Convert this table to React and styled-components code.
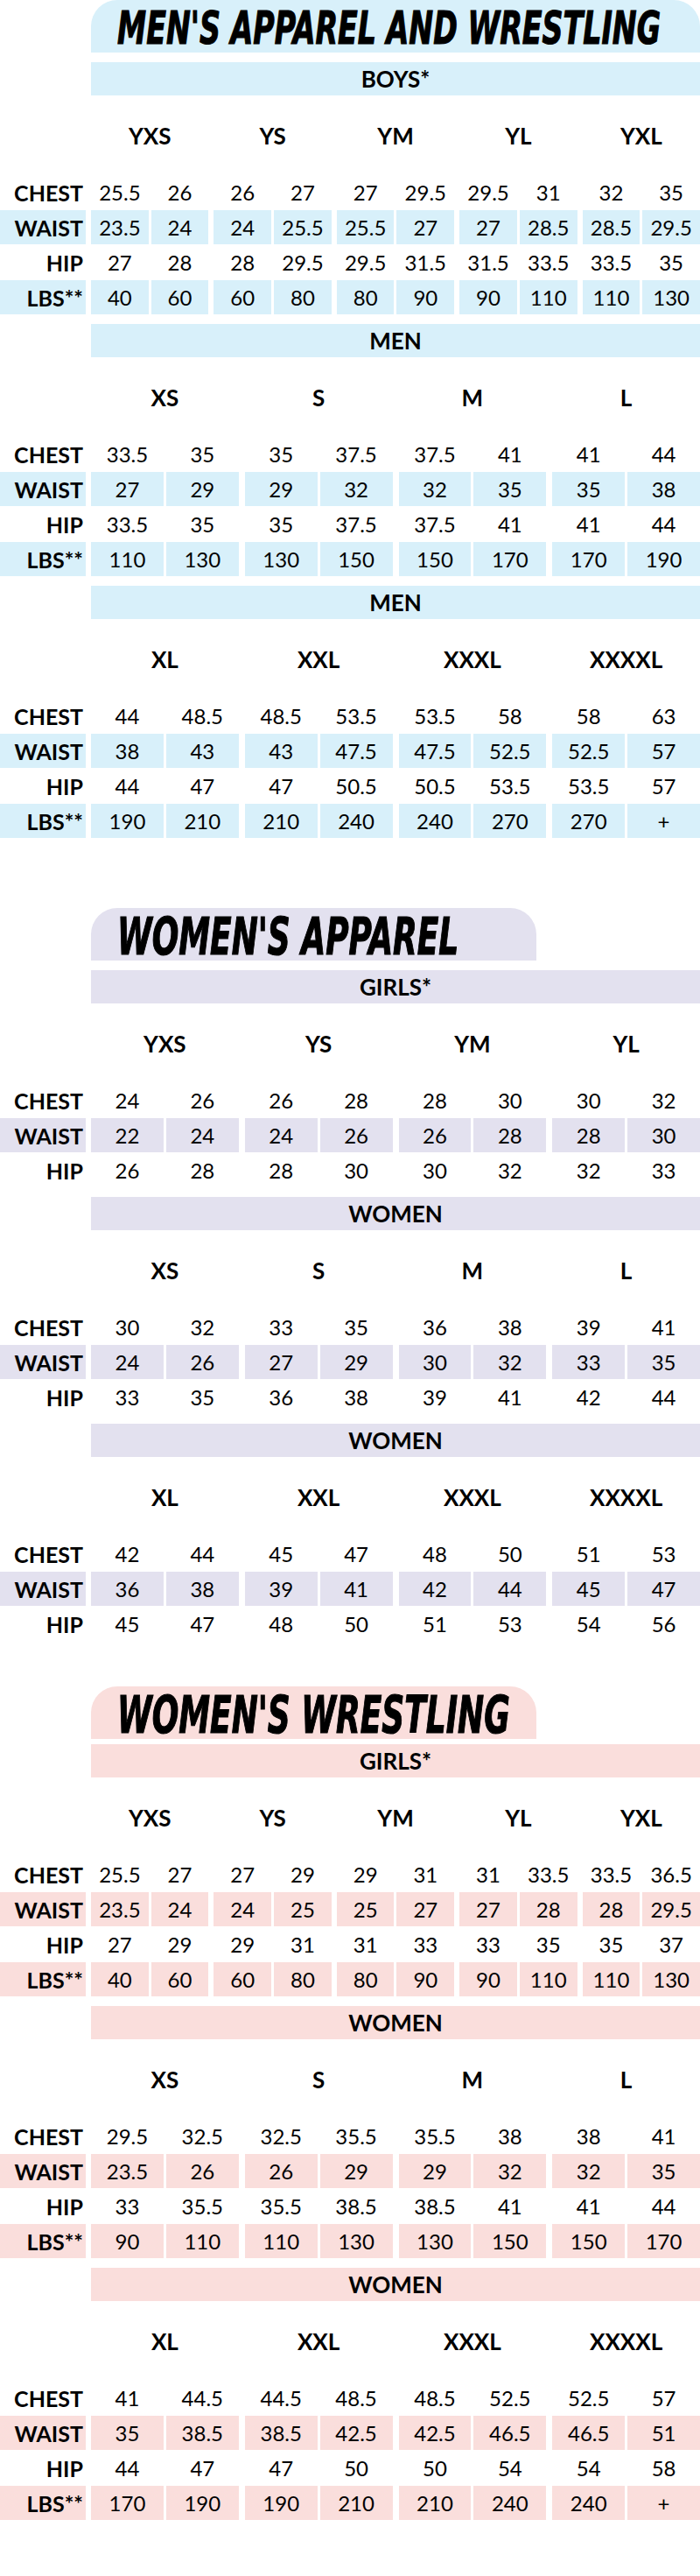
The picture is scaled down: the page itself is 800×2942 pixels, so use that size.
import React from "react";
import styled, { createGlobalStyle } from "styled-components";

const GlobalStyle = createGlobalStyle`
  body {
    margin: 0;
    background: #fff;
    color: #000;
    font-family: Lato, "Open Sans", sans-serif;
  }
`;

const Page = styled.main`
  width: 800px;
  padding-bottom: 64px;
`;

const Section = styled.section`
  display: flex;
  flex-direction: column;
  margin-top: ${(p) => p.$top}px;
`;

const TitleBand = styled.div`
  box-sizing: border-box;
  margin-left: 104px;
  margin-bottom: ${(p) => p.$gap}px;
  width: ${(p) => p.$width}px;
  height: 60px;
  padding: 5px 0 0 30px;
  display: flex;
  align-items: center;
  background: ${(p) => p.$bg};
  border-radius: 30px 30px 0 0;
`;

const Title = styled.h2`
  margin: 0;
  font-family: "DejaVu Sans Condensed", "DejaVu Sans", sans-serif;
  font-weight: 700;
  font-style: italic;
  font-size: ${(p) => p.$size}px;
  line-height: 1;
  white-space: nowrap;
  -webkit-text-stroke: 0.8px #000;
  transform: scaleY(${(p) => p.$stretch});
`;

const Table = styled.div`
  display: flex;
  flex-direction: column;
  & + & {
    margin-top: 11px;
  }
`;

const Band = styled.div`
  margin-left: 104px;
  height: 38px;
  display: flex;
  align-items: center;
  justify-content: center;
  background: ${(p) => p.$bg};
  font-weight: 700;
  font-size: 26px;
`;

const Line = styled.div`
  display: grid;
  grid-template-columns: 98px 1fr;
  column-gap: 6px;
  height: ${(p) => (p.$head ? 91 : 39)}px;
`;

const Groups = styled.div`
  display: grid;
  grid-template-columns: repeat(${(p) => p.$count}, 1fr);
  column-gap: ${(p) => (p.$count === 5 ? 6 : 7)}px;
`;

const SizeName = styled.div`
  display: flex;
  align-items: center;
  justify-content: center;
  font-weight: 700;
  font-size: 26px;
`;

const Rows = styled.div`
  display: flex;
  flex-direction: column;
  gap: 1px;
`;

const Label = styled.div`
  display: flex;
  align-items: center;
  justify-content: flex-end;
  padding-right: 3px;
  background: ${(p) => p.$bg};
  font-weight: 700;
  font-size: 25px;
`;

const Pair = styled.div`
  display: grid;
  grid-template-columns: 1fr 1fr;
  column-gap: 3px;
`;

const Cell = styled.div`
  display: flex;
  align-items: center;
  justify-content: center;
  background: ${(p) => p.$bg};
  font-size: 24px;
`;

const BLUE = "#d8f0fa";
const LAVENDER = "#e3e1ef";
const PINK = "#fadedc";

const sections = [
  {
    title: "MEN'S APPAREL AND WRESTLING",
    color: BLUE,
    width: 696,
    size: 37,
    stretch: 1.4,
    top: 0,
    gap: 11,
    tables: [
      {
        name: "BOYS*",
        sizes: ["YXS", "YS", "YM", "YL", "YXL"],
        rows: [
          ["CHEST", ["25.5", "26", "26", "27", "27", "29.5", "29.5", "31", "32", "35"]],
          ["WAIST", ["23.5", "24", "24", "25.5", "25.5", "27", "27", "28.5", "28.5", "29.5"]],
          ["HIP", ["27", "28", "28", "29.5", "29.5", "31.5", "31.5", "33.5", "33.5", "35"]],
          ["LBS**", ["40", "60", "60", "80", "80", "90", "90", "110", "110", "130"]],
        ],
      },
      {
        name: "MEN",
        sizes: ["XS", "S", "M", "L"],
        rows: [
          ["CHEST", ["33.5", "35", "35", "37.5", "37.5", "41", "41", "44"]],
          ["WAIST", ["27", "29", "29", "32", "32", "35", "35", "38"]],
          ["HIP", ["33.5", "35", "35", "37.5", "37.5", "41", "41", "44"]],
          ["LBS**", ["110", "130", "130", "150", "150", "170", "170", "190"]],
        ],
      },
      {
        name: "MEN",
        sizes: ["XL", "XXL", "XXXL", "XXXXL"],
        rows: [
          ["CHEST", ["44", "48.5", "48.5", "53.5", "53.5", "58", "58", "63"]],
          ["WAIST", ["38", "43", "43", "47.5", "47.5", "52.5", "52.5", "57"]],
          ["HIP", ["44", "47", "47", "50.5", "50.5", "53.5", "53.5", "57"]],
          ["LBS**", ["190", "210", "210", "240", "240", "270", "270", "+"]],
        ],
      },
    ],
  },
  {
    title: "WOMEN'S APPAREL",
    color: LAVENDER,
    width: 509,
    size: 40,
    stretch: 1.45,
    top: 80,
    gap: 11,
    tables: [
      {
        name: "GIRLS*",
        sizes: ["YXS", "YS", "YM", "YL"],
        rows: [
          ["CHEST", ["24", "26", "26", "28", "28", "30", "30", "32"]],
          ["WAIST", ["22", "24", "24", "26", "26", "28", "28", "30"]],
          ["HIP", ["26", "28", "28", "30", "30", "32", "32", "33"]],
        ],
      },
      {
        name: "WOMEN",
        sizes: ["XS", "S", "M", "L"],
        rows: [
          ["CHEST", ["30", "32", "33", "35", "36", "38", "39", "41"]],
          ["WAIST", ["24", "26", "27", "29", "30", "32", "33", "35"]],
          ["HIP", ["33", "35", "36", "38", "39", "41", "42", "44"]],
        ],
      },
      {
        name: "WOMEN",
        sizes: ["XL", "XXL", "XXXL", "XXXXL"],
        rows: [
          ["CHEST", ["42", "44", "45", "47", "48", "50", "51", "53"]],
          ["WAIST", ["36", "38", "39", "41", "42", "44", "45", "47"]],
          ["HIP", ["45", "47", "48", "50", "51", "53", "54", "56"]],
        ],
      },
    ],
  },
  {
    title: "WOMEN'S WRESTLING",
    color: PINK,
    width: 509,
    size: 40,
    stretch: 1.45,
    top: 52,
    gap: 6,
    tables: [
      {
        name: "GIRLS*",
        sizes: ["YXS", "YS", "YM", "YL", "YXL"],
        rows: [
          ["CHEST", ["25.5", "27", "27", "29", "29", "31", "31", "33.5", "33.5", "36.5"]],
          ["WAIST", ["23.5", "24", "24", "25", "25", "27", "27", "28", "28", "29.5"]],
          ["HIP", ["27", "29", "29", "31", "31", "33", "33", "35", "35", "37"]],
          ["LBS**", ["40", "60", "60", "80", "80", "90", "90", "110", "110", "130"]],
        ],
      },
      {
        name: "WOMEN",
        sizes: ["XS", "S", "M", "L"],
        rows: [
          ["CHEST", ["29.5", "32.5", "32.5", "35.5", "35.5", "38", "38", "41"]],
          ["WAIST", ["23.5", "26", "26", "29", "29", "32", "32", "35"]],
          ["HIP", ["33", "35.5", "35.5", "38.5", "38.5", "41", "41", "44"]],
          ["LBS**", ["90", "110", "110", "130", "130", "150", "150", "170"]],
        ],
      },
      {
        name: "WOMEN",
        sizes: ["XL", "XXL", "XXXL", "XXXXL"],
        rows: [
          ["CHEST", ["41", "44.5", "44.5", "48.5", "48.5", "52.5", "52.5", "57"]],
          ["WAIST", ["35", "38.5", "38.5", "42.5", "42.5", "46.5", "46.5", "51"]],
          ["HIP", ["44", "47", "47", "50", "50", "54", "54", "58"]],
          ["LBS**", ["170", "190", "190", "210", "210", "240", "240", "+"]],
        ],
      },
    ],
  },
];

function SizeTable({ table, color }) {
  const count = table.sizes.length;
  return (
    <Table>
      <Band $bg={color}>{table.name}</Band>
      <Line $head>
        <span />
        <Groups $count={count}>
          {table.sizes.map((s) => (
            <SizeName key={s}>{s}</SizeName>
          ))}
        </Groups>
      </Line>
      <Rows>
        {table.rows.map(([label, values], i) => {
          const bg = i % 2 === 1 ? color : "transparent";
          return (
            <Line key={label}>
              <Label $bg={bg}>{label}</Label>
              <Groups $count={count}>
                {table.sizes.map((s, g) => (
                  <Pair key={s}>
                    <Cell $bg={bg}>{values[g * 2]}</Cell>
                    <Cell $bg={bg}>{values[g * 2 + 1]}</Cell>
                  </Pair>
                ))}
              </Groups>
            </Line>
          );
        })}
      </Rows>
    </Table>
  );
}

export default function App() {
  return (
    <Page>
      <GlobalStyle />
      {sections.map((sec) => (
        <Section key={sec.title} $top={sec.top}>
          <TitleBand $bg={sec.color} $width={sec.width} $gap={sec.gap}>
            <Title $size={sec.size} $stretch={sec.stretch}>
              {sec.title}
            </Title>
          </TitleBand>
          {sec.tables.map((t, i) => (
            <SizeTable key={i} table={t} color={sec.color} />
          ))}
        </Section>
      ))}
    </Page>
  );
}
